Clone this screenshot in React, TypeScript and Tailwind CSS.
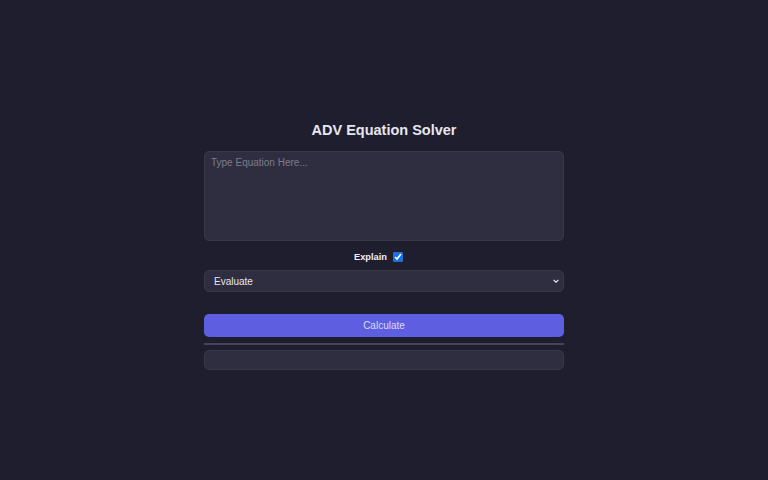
import { useState } from "react";

export default function App() {
  const [explain, setExplain] = useState(true);

  return (
    <div className="flex min-h-screen w-full justify-center bg-[#1f1e2e] pt-[121px] font-['Liberation_Sans',Arial,sans-serif]">
      <div className="flex w-[360px] flex-col">
        <h1 className="mb-[12px] text-center text-[14.5px] leading-[18px] font-bold text-[#e6e6ee]">
          ADV Equation Solver
        </h1>
        <textarea
          placeholder="Type Equation Here..."
          className="block h-[90px] w-full resize-none rounded-[5px] border border-[#383849] bg-[#2f2e40] px-[6px] py-[3px] text-[10px] text-[#e6e6ee] placeholder:text-[#7d7c8c] outline-none"
        />
        <div className="mt-[10px] flex items-center justify-center gap-[6px] pr-[11px]">
          <label htmlFor="explain" className="text-[9.3px] leading-[12px] font-bold text-[#eeeef5]">
            Explain
          </label>
          <input
            id="explain"
            type="checkbox"
            checked={explain}
            onChange={(e) => setExplain(e.target.checked)}
            className="m-0 h-[10px] w-[10px] accent-[#1a6fe0]"
          />
        </div>
        <div className="relative mt-[7px]">
          <select className="block h-[22px] w-full appearance-none rounded-[5px] border border-[#383849] bg-[#2f2e40] px-[9px] text-[10px] text-[#e6e6ee] outline-none">
            <option>Evaluate</option>
            <option>Simplify</option>
            <option>Solve</option>
          </select>
          <svg
            viewBox="0 0 10 6"
            className="pointer-events-none absolute top-[9px] right-[5px] h-[4px] w-[6px]"
            fill="none"
            stroke="#e6e6ee"
            strokeWidth="2"
          >
            <path d="M1 1l4 4 4-4" />
          </svg>
        </div>
        <button className="mt-[22px] h-[23px] w-full rounded-[5px] bg-[#5e5ee0] text-[10px] text-[#dcdcf5]">
          Calculate
        </button>
        <hr className="mt-[6px] border-t-2 border-[#44445a]" />
        <div className="mt-[5px] h-[20px] w-full rounded-[5px] border border-[#383849] bg-[#2f2e40]" />
      </div>
    </div>
  );
}
